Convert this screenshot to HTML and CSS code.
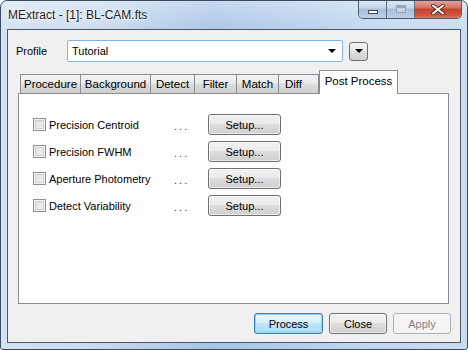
FILE: index.html
```html
<!DOCTYPE html>
<html>
<head>
<meta charset="utf-8">
<link rel="stylesheet" href="styles.css">
</head>
<body>
<div class="window">
  <div class="titlebar">
    <div class="title">MExtract - [1]: BL-CAM.fts</div>
    <div class="caption">
      <div class="cbtn cmin"><span class="min-ico"></span></div>
      <div class="cbtn cmax"><span class="max-ico"></span></div>
      <div class="cbtn cclose">
        <svg width="14" height="11" viewBox="0 0 14 11"><path d="M2 1.5 L12 9.5 M12 1.5 L2 9.5" stroke="#3a2a2a" stroke-width="3.6" stroke-linecap="round"/><path d="M2 1.5 L12 9.5 M12 1.5 L2 9.5" stroke="#ffffff" stroke-width="2" stroke-linecap="round"/></svg>
      </div>
    </div>
  </div>
  <div class="client">
    <div class="profile-row">
      <span class="profile-label">Profile</span>
      <div class="combo">
        <span class="combo-text">Tutorial</span>
        <span class="combo-arrow"></span>
      </div>
      <div class="mini-btn"><span class="combo-arrow"></span></div>
    </div>
    <div class="tabs">
      <div class="tab t-proc">Procedure</div>
      <div class="tab t-back">Background</div>
      <div class="tab t-detect">Detect</div>
      <div class="tab t-filter">Filter</div>
      <div class="tab t-match">Match</div>
      <div class="tab t-diff">Diff</div>
      <div class="tab active t-post">Post Process</div>
    </div>
    <div class="panel">
      <div class="row">
        <span class="check"></span><span class="label">Precision Centroid</span><span class="dots">. . .</span><button class="btn setup">Setup...</button>
      </div>
      <div class="row">
        <span class="check"></span><span class="label">Precision FWHM</span><span class="dots">. . .</span><button class="btn setup">Setup...</button>
      </div>
      <div class="row">
        <span class="check"></span><span class="label">Aperture Photometry</span><span class="dots">. . .</span><button class="btn setup">Setup...</button>
      </div>
      <div class="row">
        <span class="check"></span><span class="label">Detect Variability</span><span class="dots">. . .</span><button class="btn setup">Setup...</button>
      </div>
    </div>
    <div class="footer">
      <button class="btn default process">Process</button>
      <button class="btn close">Close</button>
      <button class="btn disabled apply">Apply</button>
    </div>
  </div>
</div>
</body>
</html>
```
FILE: styles.css
```css
* { box-sizing: border-box; }
html, body { margin: 0; padding: 0; background: #ffffff; }
body { font-family: "Liberation Sans", Arial, sans-serif; font-size: 11px; color: #000; }

.window {
  width: 468px;
  height: 350px;
  border: 1px solid #3a4c62;
  border-radius: 7px 7px 3px 3px;
  background: linear-gradient(90deg, #d3e2f2 0%, #c9dbee 20%, #a9c5e6 45%, #b3cdea 62%, #c2d8ef 80%, #c9dcf0 100%);
  display: flex;
  flex-direction: column;
  overflow: hidden;
}

.titlebar {
  height: 28px;
  display: flex;
  align-items: flex-start;
  padding-left: 7px;
  background: linear-gradient(180deg, rgba(255,255,255,0.35) 0%, rgba(255,255,255,0.05) 100%);
}
.title {
  font-size: 12px;
  color: #1e1e1e;
  padding-top: 7px;
  text-shadow: 0 0 6px #ffffff, 0 0 3px #ffffff;
}
.caption {
  margin-left: auto;
  margin-right: 5px;
  display: flex;
  height: 19px;
  border: 1px solid #4d5d71;
  border-top: none;
  border-radius: 0 0 5px 5px;
  overflow: hidden;
  margin-top: -1px;
}
.cbtn {
  height: 100%;
  display: flex;
  align-items: center;
  justify-content: center;
}
.cmin, .cmax {
  width: 28px;
  background: linear-gradient(180deg, #dfe9f5 0%, #c5d6ea 45%, #a9bfd9 50%, #bcd0e6 100%);
  border-right: 1px solid #5b6b80;
}
.cclose {
  width: 46px;
  background: linear-gradient(180deg, #e9a99c 0%, #d5705f 45%, #c4422d 50%, #d2563f 85%, #e07a5e 100%);
}
.min-ico {
  display: block;
  width: 10px;
  height: 4px;
  background: #ffffff;
  border: 1px solid #3b4a5e;
  margin-top: 5px;
}
.max-ico {
  display: block;
  width: 10px;
  height: 8px;
  border: 1px solid #8c9db3;
  background: #c9d6e6;
  box-shadow: inset 0 2px 0 #8c9db3;
  opacity: 0.8;
}

.client {
  flex: 1;
  margin: 0 6px 6px 6px;
  border: 1px solid #4b5666;
  background: #f0f0f0;
  display: flex;
  flex-direction: column;
}

.profile-row {
  display: flex;
  align-items: center;
  padding: 10px 0 0 8px;
  height: 32px;
}
.profile-label { width: 51px; color: #000; }
.combo {
  width: 276px;
  height: 22px;
  border: 1px solid #7eb4ea;
  border-radius: 2px;
  background: #fff;
  display: flex;
  align-items: center;
  padding: 0 6px 0 4px;
}
.combo-text { flex: 1; }
.combo-arrow {
  width: 0; height: 0;
  border-left: 4px solid transparent;
  border-right: 4px solid transparent;
  border-top: 4px solid #000;
}
.mini-btn {
  margin-left: 6px;
  width: 19px;
  height: 19px;
  border: 1px solid #707070;
  border-radius: 3px;
  background: linear-gradient(180deg, #f2f2f2 0%, #ebebeb 45%, #dddddd 50%, #cfcfcf 100%);
  display: flex;
  align-items: center;
  justify-content: center;
}

.tabs {
  display: flex;
  align-items: flex-end;
  margin: 8px 0 0 12px;
  height: 23px;
  position: relative;
  z-index: 1;
}
.tab {
  height: 19px;
  padding: 0;
  border: 1px solid #898c95;
  border-bottom: none;
  margin-right: -1px;
  background: linear-gradient(180deg, #f2f2f2 0%, #ebebeb 45%, #dddddd 50%, #cfcfcf 100%);
  display: flex;
  align-items: center;
  justify-content: center;
  font-size: 11.5px;
}
.t-proc { width: 61px; }
.t-back { width: 71px; }
.t-detect { width: 45px; }
.t-filter { width: 43px; }
.t-match { width: 43px; }
.t-diff { width: 41px; justify-content: flex-start; padding-left: 6px; }
.t-post { width: 79px; }
.tab.active {
  margin-left: 1px;
  margin-bottom: -1px;
  height: 24px;
  background: #ffffff;
  padding-bottom: 4px;
}

.panel {
  margin: 0 11px 0 10px;
  height: 211px;
  border: 1px solid #898c95;
  background: #ffffff;
  padding: 20px 0 0 14px;
  display: flex;
  flex-direction: column;
  gap: 6px;
}
.row {
  display: flex;
  align-items: center;
  height: 21px;
}
.check {
  width: 13px;
  height: 13px;
  border: 1px solid #8e8f8f;
  background: linear-gradient(135deg, #dcdcdc 0%, #f4f4f4 100%);
  box-shadow: inset 0 0 0 1px #f4f4f4, inset 0 0 0 2px #d0d0d0;
}
.label { margin-left: 3px; width: 125px; }
.dots { width: 34px; color: #800080; letter-spacing: -0.5px; padding-top: 3px; }
.btn {
  font: inherit;
  font-size: 11px;
  color: #000;
  height: 21px;
  border: 1px solid #707070;
  border-radius: 3px;
  background: linear-gradient(180deg, #f2f2f2 0%, #ebebeb 45%, #dddddd 50%, #cfcfcf 100%);
  padding: 0;
  box-shadow: inset 0 0 0 1px rgba(255,255,255,0.6);
}
.setup { width: 73px; }

.footer {
  display: flex;
  justify-content: flex-end;
  gap: 6px;
  padding: 9px 9px 0 0;
}
.process {
  width: 69px;
  border-color: #3c7fb1;
  background: linear-gradient(180deg, #eaf6fd 0%, #d9f0fc 45%, #bee6fd 50%, #a7d9f5 100%);
  box-shadow: inset 0 0 0 1px #98d1ef;
}
.close { width: 58px; }
.disabled {
  width: 58px;
  border-color: #adb2b5;
  background: #f4f4f4;
  color: #838383;
  box-shadow: none;
}
```
